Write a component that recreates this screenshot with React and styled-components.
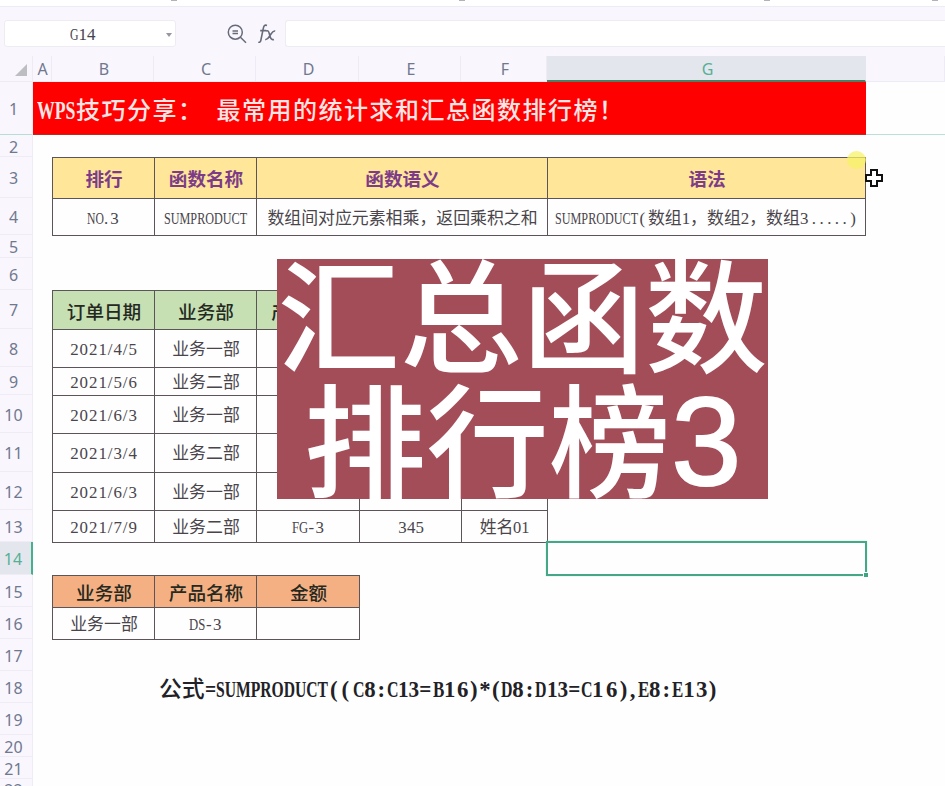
import React, { useLayoutEffect, useRef, useState } from 'react';
import styled, { createGlobalStyle, css } from 'styled-components';

const GlobalStyle = createGlobalStyle`
  * {
    box-sizing: border-box;
  }

  body {
    margin: 0;
    background: #ffffff;
  }
`;

const songFont = `'Liberation Serif', 'Noto Sans CJK SC', serif`;
const heiFont = `'Noto Sans CJK SC', sans-serif`;
const uiFont = `'Noto Sans', 'Open Sans', sans-serif`;

const Window = styled.main`
  position: relative;
  display: flex;
  flex-direction: column;
  width: 945px;
  height: 786px;
  overflow: hidden;
  background: #fefefe;
  font-family: ${songFont};
`;

const Ribbon = styled.div`
  display: flex;
  flex: none;
  height: 7px;
  padding-left: 171px;
  background: #ffffff;
  border-bottom: 1px solid #ececf4;
`;

const RibbonTick = styled.span`
  width: 6px;
  height: 1px;
  margin-right: ${({ $gap }) => $gap}px;
  background: #b3b1b9;
`;

const FormulaBar = styled.div`
  display: flex;
  flex: none;
  align-items: center;
  height: 49px;
  padding: 5px 0 0 4px;
  background: #faf6fe;
`;

const NameBox = styled.div`
  display: flex;
  align-items: center;
  width: 172px;
  height: 27px;
  margin-top: -1px;
  padding: 2px 3px 0 65px;
  background: #ffffff;
  border: 1px solid #eeebf3;
  border-radius: 3px;
  color: #44434b;
  font-size: 17px;
`;

const Caret = styled.span`
  margin-left: auto;
  border: 3px solid transparent;
  border-top: 4px solid #96979f;
  border-bottom: 0;
`;

const Tools = styled.div`
  display: flex;
  align-items: center;
  gap: 11px;
  width: 109px;
  padding-left: 51px;
`;

const FormulaInput = styled.div`
  flex: 1;
  height: 27px;
  margin-top: -1px;
  background: #ffffff;
  border: 1px solid #eeebf3;
  border-right: 0;
  border-radius: 3px 0 0 3px;
`;

const Sheet = styled.div`
  position: relative;
  display: grid;
  flex: none;
  grid-template-columns: 33px 19px 102px 102px 103px 102px 86px 319px 79px;
  grid-template-rows:
    26px 53px 22px 41px 37px 23px 32px 39px 38px 28px 38px 39px
    38px 32px 33px 32px 32px 32px 32px 32px 22px 22px 21px;
`;

const headBase = css`
  display: flex;
  align-items: center;
  justify-content: center;
  color: ${({ $active }) => ($active ? '#56b095' : '#6f798e')};
  background: ${({ $active }) => ($active ? '#e4e6ed' : '#faf6fe')};
  font-family: ${uiFont};
  font-size: 16px;
  line-height: 1;
`;

const ColHead = styled.div`
  ${headBase}
  grid-row: 1;
  padding: 1px 0 0 ${({ $narrow }) => ($narrow ? 1 : 3)}px;
  border-right: 1px solid ${({ $active }) => ($active ? '#e4e6ed' : '#eeebf4')};
  border-bottom: ${({ $active }) => ($active ? '2px solid #4a8065' : '1px solid #eeebf4')};
`;

const RowHead = styled.div`
  ${headBase}
  grid-column: 1;
  padding: 2px 5px 0 0;
  border-right: ${({ $active }) => ($active ? '2px solid #45b08c' : '1px solid #efecf5')};
  border-bottom: 1px solid ${({ $freeze }) => ($freeze ? '#b6ddd6' : '#f0ecf5')};
`;

const Corner = styled.div`
  grid-area: 1 / 1;
  display: flex;
  align-items: flex-end;
  justify-content: flex-end;
  padding: 0 5px 5px 0;
  background: #faf6fe;
  border-right: 1px solid #eeebf4;
  border-bottom: 1px solid #eeebf4;
`;

const CornerMark = styled.span`
  border-left: 12px solid transparent;
  border-bottom: 12px solid #bdbec2;
`;

const Title = styled.h1`
  grid-area: 2 / 2 / 3 / 9;
  display: flex;
  align-items: center;
  margin: 0;
  padding: 5px 0 0 4px;
  background: #fe0000;
  border-bottom: 1px solid #bd2a22;
  color: #ffe6e6;
  font-family: ${songFont};
  font-size: 26px;
  font-weight: 500;
  line-height: 1;
  white-space: pre;
`;

const TitleLatin = styled.span`
  font-weight: 700;
`;

const TitleHan = styled.span`
  font-size: 24px;
  letter-spacing: 1.5px;
`;

const FreezeLine = styled.div`
  grid-area: 2 / 9;
  border-bottom: 1px solid #bcdfd9;
`;

const fills = {
  gold: '#ffe699',
  green: '#c6e0b4',
  orange: '#f4b083',
};

const Cell = styled.div`
  grid-row: ${({ $row }) => $row + 1};
  grid-column: ${({ $col, $span = 1 }) => `${$col} / span ${$span}`};
  display: flex;
  align-items: center;
  justify-content: center;
  margin: 0 ${({ $col }) => ($col === 8 ? 0 : -1)}px -1px 0;
  padding: ${({ $row }) => ($row === 4 ? 5 : 3)}px 0 0 1px;
  background: ${({ $fill }) => fills[$fill] || 'transparent'};
  border: 1px solid #5b5458;
  color: #4a454b;
  font-size: 16.9px;
  line-height: 1;
  white-space: nowrap;

  ${({ $fill }) =>
    $fill &&
    css`
      padding-top: ${$fill === 'gold' ? 1 : 2}px;
      color: ${$fill === 'gold' ? '#7d3c88' : '#25291f'};
      font-family: ${heiFont};
      font-size: 18.6px;
      font-weight: ${$fill === 'gold' ? 700 : 500};
    `}
`;

const Formula = styled.div`
  grid-area: 19 / 4 / 20 / 9;
  display: flex;
  align-items: center;
  padding: 7px 0 0 5px;
  color: #222126;
  font-size: 22.8px;
  font-weight: 600;
  line-height: 1;
  white-space: nowrap;
`;

const Han = styled.span`
  font-weight: ${({ $medium }) => ($medium ? 500 : 'inherit')};
`;

const HalfBox = styled.span`
  display: inline-block;
  white-space: pre;
`;

const HalfInner = styled.span`
  display: inline-block;
  transform-origin: left center;
`;

const Selection = styled.div`
  position: absolute;
  left: 546px;
  top: 485px;
  width: 321px;
  height: 35px;
  border: 2px solid #46a688;
  box-shadow: 0 0 1px #8fe0c6;

  &::after {
    content: '';
    position: absolute;
    right: -3px;
    bottom: -3px;
    width: 4px;
    height: 4px;
    background: #3ba683;
    box-shadow: 0 0 0 1px #ffffff;
  }
`;

const ClickSpot = styled.div`
  position: absolute;
  left: 847px;
  top: 151px;
  width: 19px;
  height: 18px;
  border-radius: 50%;
  background: rgba(247, 241, 105, 0.75);
`;

const Pointer = styled.svg`
  position: absolute;
  left: 865px;
  top: 169px;
`;

const Banner = styled.div`
  position: absolute;
  left: 277px;
  top: 259px;
  display: flex;
  flex-direction: column;
  align-items: center;
  width: 491px;
  height: 240px;
  background: #a34d59;
  color: #ffffff;
  font-family: 'Noto Sans CJK SC', sans-serif;
  font-size: 122.5px;
  font-weight: 500;
  white-space: nowrap;
`;

const BannerLine = styled.div`
  display: flex;
  height: ${({ $height }) => $height}px;
  line-height: ${({ $leading }) => $leading}px;
`;

const BannerDigit = styled.span`
  padding-top: 7px;
  font-family: 'Liberation Sans', sans-serif;
  font-size: 126px;
  -webkit-text-stroke: 2px #ffffff;
`;

// Latin run set on half-width cells: squeezed when too wide, tracked out when too narrow
function HalfRun({ text }) {
  const box = useRef(null);
  const inner = useRef(null);
  const [style, setStyle] = useState({});

  useLayoutEffect(() => {
    const size = parseFloat(getComputedStyle(box.current).fontSize);
    const natural = inner.current.offsetWidth;
    const target = (text.length * size) / 2;
    if (natural > target) {
      setStyle({ transform: `scaleX(${(target * 0.98) / natural})` });
    } else {
      setStyle({ letterSpacing: (target - natural) / text.length });
    }
  }, [text]);

  return (
    <HalfBox ref={box} style={{ width: `${text.length / 2}em` }}>
      <HalfInner ref={inner} style={style}>{text}</HalfInner>
    </HalfBox>
  );
}

// Splits capitals from the rest so each run gets its own fit
function Half({ children }) {
  return children.match(/[A-Z]+|[^A-Z]+/g).map((run, i) => <HalfRun key={i} text={run} />);
}

function Mixed({ text, medium }) {
  return text.match(/[\x20-\x7e]+|[^\x20-\x7e]+/g).map((part, i) =>
    /[\x20-\x7e]/.test(part) ? <Half key={i}>{part}</Half> : <Han key={i} $medium={medium}>{part}</Han>
  );
}

const columns = ['A', 'B', 'C', 'D', 'E', 'F', 'G'];
const rows = Array.from({ length: 22 }, (_, i) => i + 1);

const cells = [
  { row: 3, col: 3, text: '排行', fill: 'gold' },
  { row: 3, col: 4, text: '函数名称', fill: 'gold' },
  { row: 3, col: 5, span: 3, text: '函数语义', fill: 'gold' },
  { row: 3, col: 8, text: '语法', fill: 'gold' },
  { row: 4, col: 3, text: 'NO.3' },
  { row: 4, col: 4, text: 'SUMPRODUCT' },
  { row: 4, col: 5, span: 3, text: '数组间对应元素相乘，返回乘积之和' },
  { row: 4, col: 8, text: 'SUMPRODUCT(数组1，数组2，数组3.....)' },
  { row: 7, col: 3, text: '订单日期', fill: 'green' },
  { row: 7, col: 4, text: '业务部', fill: 'green' },
  { row: 7, col: 5, text: '产品名称', fill: 'green' },
  { row: 7, col: 6, fill: 'green' },
  { row: 7, col: 7, fill: 'green' },
  { row: 15, col: 3, text: '业务部', fill: 'orange' },
  { row: 15, col: 4, text: '产品名称', fill: 'orange' },
  { row: 15, col: 5, text: '金额', fill: 'orange' },
  { row: 16, col: 3, text: '业务一部' },
  { row: 16, col: 4, text: 'DS-3' },
  { row: 16, col: 5 },
];

const orders = [
  ['2021/4/5', '业务一部', '', '', ''],
  ['2021/5/6', '业务二部', '', '', ''],
  ['2021/6/3', '业务一部', '', '', ''],
  ['2021/3/4', '业务二部', '', '', ''],
  ['2021/6/3', '业务一部', '', '', ''],
  ['2021/7/9', '业务二部', 'FG-3', '345', '姓名01'],
];

const App = () => (
  <>
    <GlobalStyle />
    <Window>
      <Ribbon>
        <RibbonTick $gap={282} />
        <RibbonTick $gap={299} />
        <RibbonTick $gap={162} />
        <RibbonTick $gap={0} />
      </Ribbon>

      <FormulaBar>
        <NameBox>
          <Half>G14</Half>
          <Caret />
        </NameBox>
        <Tools>
          <svg width="20" height="20" viewBox="0 0 20 20" fill="none" stroke="#666b7a" strokeWidth="1.5">
            <circle cx="8.3" cy="8.2" r="7" />
            <path d="M13.4 13.3l5.6 5.5M5.5 6.9h5.5M5.5 9.5h5.5" />
          </svg>
          <svg width="18" height="20" viewBox="0 0 18 20" fill="none" stroke="#666b7a" strokeWidth="1.6">
            <path d="M9 1.4C6.6.6 5.8 2 5.3 4.3L2.9 16c-.4 2-1.1 2.6-2.6 2.2M2.2 6.6h6" />
            <path d="M8 7.1c2.4-1 2.8.5 3.6 3.7.9 3.7 1.8 5.6 4.3 4.6M17.2 7.1c-2.4-.8-3.3 1.5-5.2 4.4-1.7 2.7-2.6 4.6-4.8 3.9" />
          </svg>
        </Tools>
        <FormulaInput />
      </FormulaBar>

      <Sheet>
        <Corner><CornerMark /></Corner>
        {columns.map((name) => (
          <ColHead key={name} $active={name === 'G'} $narrow={name === 'A'}>{name}</ColHead>
        ))}
        <ColHead />
        {rows.map((n) => (
          <RowHead key={n} $active={n === 14} $freeze={n === 1} style={{ gridRow: n + 1 }}>{n}</RowHead>
        ))}

        <Title>
          <TitleLatin><Half>WPS</Half></TitleLatin>
          <TitleHan>技巧分享：</TitleHan>
          <Half> </Half>
          <TitleHan>最常用的统计求和汇总函数排行榜！</TitleHan>
        </Title>
        <FreezeLine />

        {cells.map(({ row, col, span, text, fill }) => (
          <Cell key={`${row}-${col}`} $row={row} $col={col} $span={span} $fill={fill}>
            {text && <Mixed text={text} />}
          </Cell>
        ))}
        {orders.map((order, r) =>
          order.map((text, c) => (
            <Cell key={`${r}-${c}`} $row={r + 8} $col={c + 3}>
              {text && <Mixed text={text} />}
            </Cell>
          ))
        )}

        <Formula>
          <Mixed text="公式=SUMPRODUCT((C8:C13=B16)*(D8:D13=C16),E8:E13)" medium />
        </Formula>
        <Selection />
      </Sheet>

      <ClickSpot />
      <Pointer width="19" height="19" viewBox="0 0 19 19">
        <path d="M7 2h6v5h5v6h-5v5H7v-5H2V7h5z" fill="#111" />
        <path d="M6 1h6v5h5v6h-5v5H6v-5H1V6h5z" fill="#fff" stroke="#111" strokeWidth="2" />
      </Pointer>

      <Banner>
        <BannerLine $height={121} $leading={102}>汇总函数</BannerLine>
        <BannerLine $height={119} $leading={109}>
          排行榜<BannerDigit>3</BannerDigit>
        </BannerLine>
      </Banner>
    </Window>
  </>
);

export default App;
